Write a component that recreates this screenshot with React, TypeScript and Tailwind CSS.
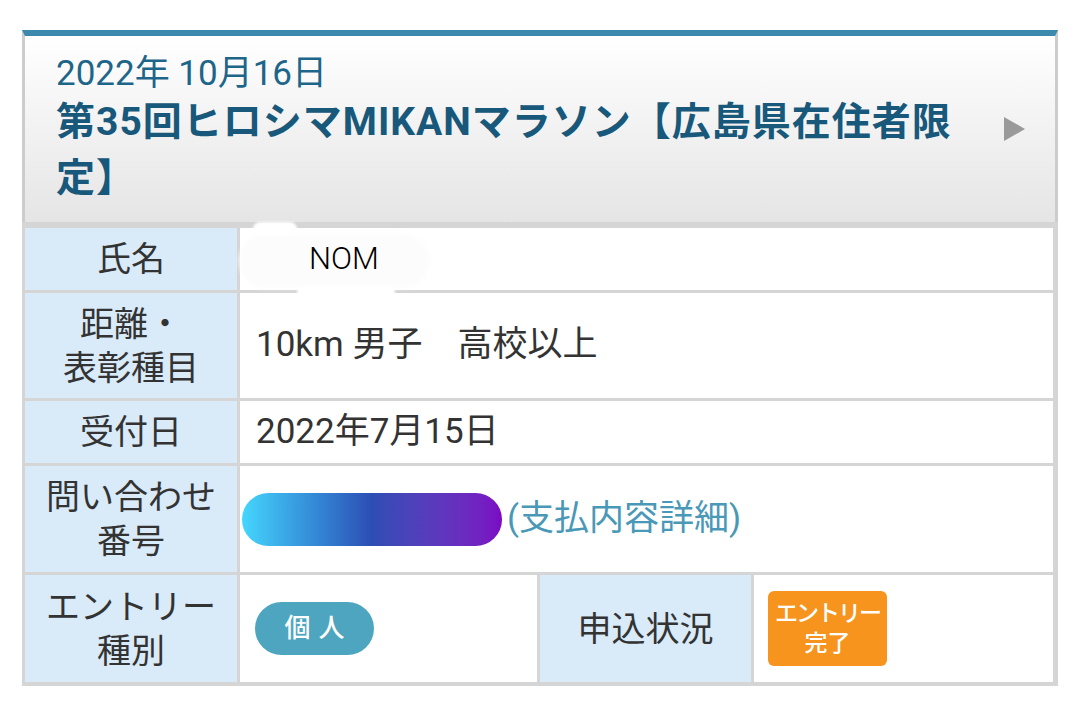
import { ReactNode } from "react";

function Label({ children, className = "" }: { children: ReactNode; className?: string }) {
  return (
    <div
      className={`flex items-center justify-center bg-[#d9eaf8] text-center text-[34px] leading-[44px] text-[#333333] ${className}`}
    >
      {children}
    </div>
  );
}

function Value({ children, className = "" }: { children: ReactNode; className?: string }) {
  return (
    <div className={`flex items-center bg-white text-[35px] text-[#333333] ${className}`}>
      {children}
    </div>
  );
}

function App() {
  return (
    <div className="min-h-screen bg-white px-[22px] pt-[30px] font-['Roboto','Noto_Sans_CJK_JP',sans-serif]">
      {/* event header */}
      <div className="flex items-start border-x-[3px] border-t-[6px] border-x-[#cccccc] border-t-[#3b89ad] bg-gradient-to-b from-white to-[#e5e5e5] pb-[16px] pl-[31px] pr-[30px] pt-[18px]">
        <div className="w-[916px] flex-none">
          <div className="text-[35px] leading-[40px] text-[#1d6589]">2022年 10月16日</div>
          <div className="text-[39px] font-bold leading-[56px] tracking-[1px] text-[#17587b]">
            第35回ヒロシマMIKANマラソン【広島県在住者限定】
          </div>
        </div>
        <div className="flex flex-1 justify-end">
          <svg width="21" height="24" viewBox="0 0 21 24" className="mt-[63px] flex-none">
            <polygon points="0,0 21,12 0,24" fill="#9a9a9a" />
          </svg>
        </div>
      </div>

      {/* entry table */}
      <div className="flex flex-col gap-[3px] border-b-[4px] border-l-[3px] border-r-[5px] border-t-[6px] border-[#d5d5d5] bg-[#d5d5d5]">
        <div className="relative flex h-[62px] gap-[3px]">
          <Label className="w-[212px]">氏名</Label>
          <Value className="flex-1" />
          {/* blurred name cover */}
          <div className="pointer-events-none absolute left-[214px] top-[6px] h-[54px] w-[190px] rounded-full bg-[#fcfcfc] blur-[2px]" />
          <div className="pointer-events-none absolute left-[228px] top-[-6px] h-[14px] w-[44px] rounded-full bg-white blur-[1px]" />
          <div className="pointer-events-none absolute left-[272px] top-[58px] h-[12px] w-[98px] rounded-full bg-white blur-[1px]" />
          <span className="pointer-events-none absolute left-[284px] top-[13px] text-[31px] font-light leading-[36px] text-black">
            NOM
          </span>
        </div>

        <div className="flex h-[105px] gap-[3px]">
          <Label className="w-[212px]">
            距離・
            <br />
            表彰種目
          </Label>
          <Value className="flex-1 pl-[16px]">10km 男子　高校以上</Value>
        </div>

        <div className="flex h-[62px] gap-[3px]">
          <Label className="w-[212px]">受付日</Label>
          <Value className="flex-1 pl-[16px]">2022年7月15日</Value>
        </div>

        <div className="flex h-[106px] gap-[3px]">
          <Label className="w-[212px]">
            問い合わせ
            <br />
            番号
          </Label>
          <Value className="flex-1 gap-[5px] pl-[2px]">
            <div className="h-[53px] w-[260px] rounded-full bg-gradient-to-r from-[#45d6fd] via-[#2c4db5] to-[#7b08c4]" />
            <span className="text-[#4a98b8]">(支払内容詳細)</span>
          </Value>
        </div>

        <div className="flex h-[107px] gap-[3px]">
          <Label className="w-[212px]">
            エントリー
            <br />
            種別
          </Label>
          <Value className="w-[297px] pl-[15px]">
            <div className="flex h-[53px] w-[119px] items-center justify-center rounded-full bg-[#4ea5bf] text-[26px] font-medium tracking-[8px] text-white">
              <span className="pl-[8px]">個人</span>
            </div>
          </Value>
          <Label className="w-[211px]">申込状況</Label>
          <Value className="flex-1 pl-[14px]">
            <div className="flex h-[75px] w-[119px] flex-col items-center justify-center rounded-[6px] bg-[#f7941d] text-[23px] font-medium leading-[30px] text-white">
              <span className="tracking-[-2px]">エントリー</span>
              <span>完了</span>
            </div>
          </Value>
        </div>
      </div>
    </div>
  );
}

export default App;
